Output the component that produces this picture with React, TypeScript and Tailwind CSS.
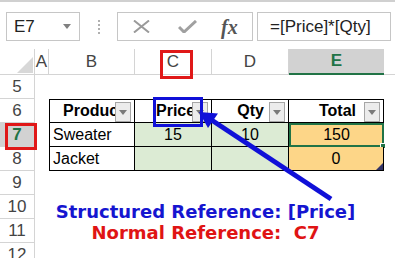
import React from 'react';

const COLS = [35, 14, 86, 77, 77, 95];

function FilterBtn() {
  return (
    <span className="absolute right-[3px] top-[2px] flex h-[20px] w-[16px] items-center justify-center border border-[#a6a6a6] bg-[#ececec]">
      <svg width="8" height="5" viewBox="0 0 8 5">
        <path d="M0 0h8L4 5z" fill="#7a7a7a" />
      </svg>
    </span>
  );
}

function RowHead({ n, active }: { n: number | string; active?: boolean }) {
  return (
    <div
      className={`flex h-full w-[35px] shrink-0 items-center justify-center border-b border-r border-[#d4d4d4] text-[17px] ${
        active ? 'bg-[#d2d2d2] font-bold text-[#217346]' : 'font-normal text-[#444]'
      }`}
    >
      {n}
    </div>
  );
}

export default function App() {
  const font = { fontFamily: '"Liberation Sans", Arial, sans-serif' };
  return (
    <div className="relative h-[258px] w-[395px] overflow-hidden bg-white" style={font}>
      <div className="h-[2px] bg-[#d0d0d0]" />

      {/* formula bar */}
      <div className="mt-[10px] flex h-[29px] items-stretch">
        <div className="ml-[6px] flex w-[74px] items-center justify-between border border-[#c6c6c6] pl-[7px] pr-[8px] text-[17px] text-[#222]">
          <span>E7</span>
          <svg width="8" height="5" viewBox="0 0 8 5">
            <path d="M0 0h8L4 5z" fill="#808080" />
          </svg>
        </div>
        <div className="flex w-[37px] items-center justify-center">
          <div className="flex flex-col gap-[2px]">
            <span className="h-[2px] w-[2px] bg-[#b0b0b0]" />
            <span className="h-[2px] w-[2px] bg-[#b0b0b0]" />
            <span className="h-[2px] w-[2px] bg-[#b0b0b0]" />
            <span className="h-[2px] w-[2px] bg-[#b0b0b0]" />
          </div>
        </div>
        <div className="flex w-[136px] items-center border border-[#c6c6c6]">
          <svg className="ml-[15px]" width="17" height="13" viewBox="0 0 17 13">
            <path d="M1 0.5L16 12.5M16 0.5L1 12.5" stroke="#9a9a9a" strokeWidth="2" />
          </svg>
          <svg className="ml-[28px]" width="19" height="13" viewBox="0 0 19 13">
            <path d="M1 7l5 5L18 1" stroke="#a0a0a0" strokeWidth="3" fill="none" />
          </svg>
          <span
            className="ml-[24px] text-[20px] font-bold italic text-[#555]"
            style={{ fontFamily: '"Liberation Serif", serif' }}
          >
            fx
          </span>
        </div>
        <div className="ml-[4px] flex w-[134px] items-center border border-[#c6c6c6] pl-[12px] text-[17px] text-[#222]">
          =[Price]*[Qty]
        </div>
      </div>

      {/* column headers */}
      <div className="mt-[8px] flex h-[26px] text-[17px] text-[#444]">
        <div className="relative w-[35px] border-r border-b border-[#d4d4d4]">
          <svg className="absolute left-[17px] top-[8px]" width="16" height="16" viewBox="0 0 16 16">
            <path d="M16 0V16H0z" fill="#d8d8d8" />
          </svg>
        </div>
        {['A', 'B', 'C', 'D'].map((c, i) => (
          <div
            key={c}
            style={{ width: COLS[i + 1] }}
            className="flex shrink-0 items-center justify-center border-r border-b border-[#d4d4d4]"
          >
            {c}
          </div>
        ))}
        <div className="flex w-[95px] shrink-0 items-center justify-center border-b-2 border-[#217346] bg-[#d2d2d2] font-bold text-[#217346]">
          E
        </div>
        <div className="flex-1 border-b border-[#d4d4d4]" />
      </div>

      {/* row 5 */}
      <div className="flex h-[24px]">
        <RowHead n={5} />
      </div>

      {/* row 6: table header */}
      <div className="flex h-[24px] text-[16px] font-bold text-black">
        <RowHead n={6} />
        <div className="w-[14px]" />
        <div className="relative w-[86px] overflow-hidden border border-black pl-[13px] leading-[22px]">
          Product
          <FilterBtn />
        </div>
        <div className="relative w-[77px] border-y border-r border-black pl-[21px] leading-[22px]">
          Price
          <FilterBtn />
        </div>
        <div className="relative w-[77px] border-y border-r border-black pr-[24px] text-right leading-[22px]">
          Qty
          <FilterBtn />
        </div>
        <div className="relative w-[95px] border-y border-r border-black pr-[27px] text-right leading-[22px]">
          Total
          <FilterBtn />
        </div>
      </div>

      {/* row 7 */}
      <div className="flex h-[24px] text-[16px] text-black">
        <RowHead n={7} active />
        <div className="w-[14px]" />
        <div className="w-[86px] border-x border-b border-black pl-[3px] leading-[23px]">Sweater</div>
        <div className="w-[77px] border-r border-b border-black bg-[#dcebd4] text-center leading-[23px]">15</div>
        <div className="w-[77px] border-r border-b border-black bg-[#dcebd4] text-center leading-[23px]">10</div>
        <div className="relative w-[95px] border-2 border-[#217346] bg-[#fdd688] text-center leading-[20px]">
          150
          <span className="absolute -bottom-[4px] -right-[4px] h-[6px] w-[6px] border border-white bg-[#217346]" />
        </div>
      </div>

      {/* row 8 */}
      <div className="flex h-[24px] text-[16px] text-black">
        <RowHead n={8} />
        <div className="w-[14px]" />
        <div className="w-[86px] border-x border-b border-black pl-[3px] leading-[23px]">Jacket</div>
        <div className="w-[77px] border-r border-b border-black bg-[#dcebd4]" />
        <div className="w-[77px] border-r border-b border-black bg-[#dcebd4]" />
        <div className="relative w-[95px] border-r border-b border-black bg-[#fdd688] text-center leading-[23px]">
          0
          <svg className="absolute bottom-0 right-0" width="7" height="7" viewBox="0 0 7 7">
            <path d="M7 0V7H0z" fill="#333366" />
          </svg>
        </div>
      </div>

      {[9, 10, 11, 12].map((n) => (
        <div key={n} className="flex h-[24px]">
          <RowHead n={n} />
        </div>
      ))}

      {/* red reference boxes */}
      <div className="pointer-events-none absolute left-[160px] top-[50px] h-[29px] w-[33px] border-[3px] border-[#e01818]" />
      <div className="pointer-events-none absolute left-[5px] top-[123px] h-[27px] w-[32px] border-[3px] border-[#e01818]" />

      {/* blue box + arrow */}
      <div className="pointer-events-none absolute left-[153px] top-[97px] h-[30px] w-[50px] border-[3px] border-[#1010d8]" />
      <svg className="pointer-events-none absolute left-0 top-0" width="395" height="258" viewBox="0 0 395 258">
        <line x1="331" y1="199" x2="210" y2="119" stroke="#1010d8" strokeWidth="5" />
        <path d="M199 112L218 113.5L208 128z" fill="#1010d8" />
      </svg>

      {/* notes */}
      <div
        className="pointer-events-none absolute left-0 top-[201px] flex w-[411px] flex-col items-center text-[18px] font-bold leading-[21px]"
        style={{ fontFamily: '"DejaVu Sans", Verdana, sans-serif' }}
      >
        <span className="text-[#1515d0]">Structured Reference: [Price]</span>
        <span className="text-[#e01414]">Normal Reference:&nbsp; C7</span>
      </div>
    </div>
  );
}
